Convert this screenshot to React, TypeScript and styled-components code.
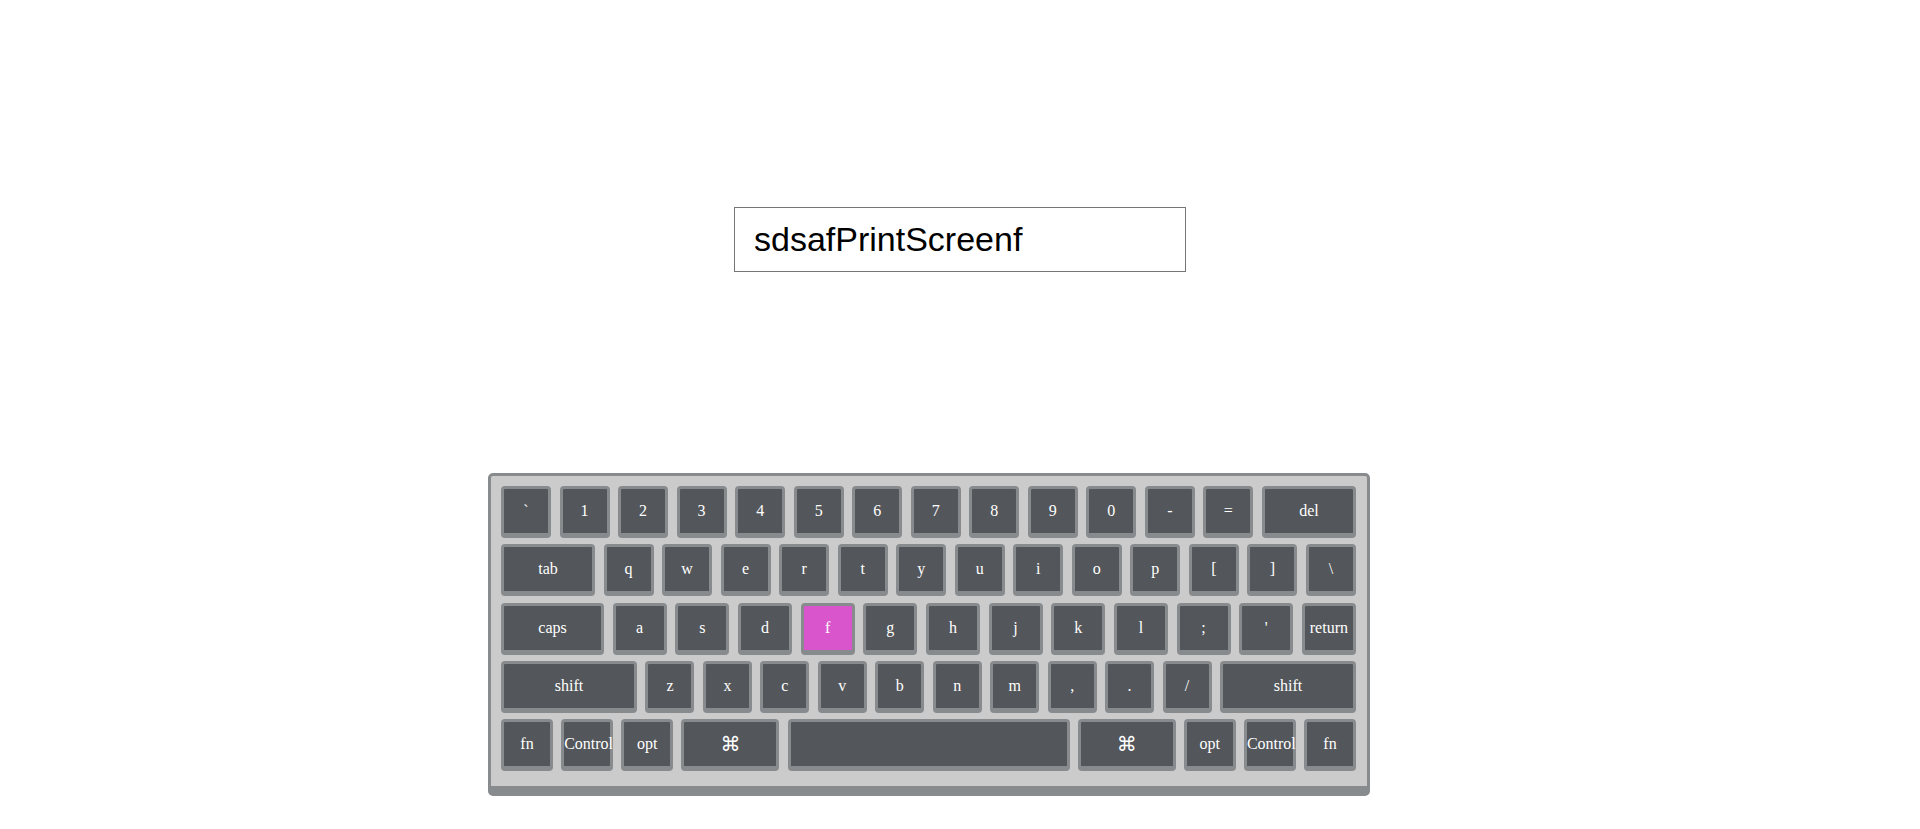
import React from "react";
import styled, { createGlobalStyle } from "styled-components";

const GlobalStyle = createGlobalStyle`
  html, body {
    margin: 0;
    padding: 0;
    background: #ffffff;
  }
  body {
    font-family: "Liberation Serif", "Times New Roman", serif;
  }
`;

const Page = styled.main`
  width: 1920px;
  min-height: 829px;
  display: flex;
  flex-direction: column;
  align-items: center;
`;

const TextField = styled.input`
  box-sizing: border-box;
  margin-top: 207px;
  width: 452px;
  height: 65px;
  padding: 0 18px 0 19px;
  border: 1px solid #767676;
  border-radius: 0;
  outline: none;
  font-family: "Liberation Sans", Arial, sans-serif;
  font-size: 34px;
  color: #000;
  background: #fff;
`;

const Board = styled.div`
  box-sizing: border-box;
  align-self: flex-start;
  margin: 201px 0 0 488px;
  width: 882px;
  padding: 10px 11px 15px 10px;
  background: #cbcbcb;
  border: 3px solid #888b8d;
  border-bottom-width: 10px;
  border-radius: 5px;
  display: flex;
  flex-direction: column;
  gap: 6.25px;
`;

const Row = styled.div`
  display: flex;
  justify-content: space-between;
`;

const Key = styled.div<{ $w: number; $active?: boolean; $symbol?: boolean }>`
  box-sizing: border-box;
  flex: 0 0 auto;
  width: ${(p) => p.$w}px;
  height: 52px;
  border: 3px solid #888b8d;
  border-bottom-width: 5px;
  border-radius: 4px;
  background: ${(p) => (p.$active ? "#d955cc" : "#53565a")};
  color: #ffffff;
  font-family: "Liberation Serif", "Times New Roman", "DejaVu Sans", serif;
  font-size: ${(p) => (p.$symbol ? "20px" : "16px")};
  font-weight: 400;
  line-height: 42px;
  padding-top: 1px;
  text-align: center;
  white-space: nowrap;
  user-select: none;
`;

type KeyDef = { label: string; w: number };

const k = (labels: string[], w: number): KeyDef[] =>
  labels.map((label) => ({ label, w }));

const rows: KeyDef[][] = [
  [
    ...k(["`", "1", "2", "3", "4", "5", "6", "7", "8", "9", "0", "-", "="], 50),
    { label: "del", w: 94 },
  ],
  [
    { label: "tab", w: 94 },
    ...k(["q", "w", "e", "r", "t", "y", "u", "i", "o", "p", "[", "]", "\\"], 50),
  ],
  [
    { label: "caps", w: 103 },
    ...k(["a", "s", "d", "f", "g", "h", "j", "k", "l", ";", "'", "return"], 54),
  ],
  [
    { label: "shift", w: 136 },
    ...k(["z", "x", "c", "v", "b", "n", "m", ",", ".", "/"], 49),
    { label: "shift", w: 136 },
  ],
  [
    ...k(["fn", "Control", "opt"], 52),
    { label: "⌘", w: 98 },
    { label: "", w: 282 },
    { label: "⌘", w: 98 },
    ...k(["opt", "Control", "fn"], 52),
  ],
];

export default function App() {
  const active = "f";
  return (
    <>
      <GlobalStyle />
      <Page>
        <TextField defaultValue="sdsafPrintScreenf" />
        <Board>
          {rows.map((row, ri) => (
            <Row key={ri}>
              {row.map((key, ki) => (
                <Key
                  key={ki}
                  $w={key.w}
                  $active={key.label === active}
                  $symbol={key.label === "⌘"}
                >
                  {key.label}
                </Key>
              ))}
            </Row>
          ))}
        </Board>
      </Page>
    </>
  );
}
